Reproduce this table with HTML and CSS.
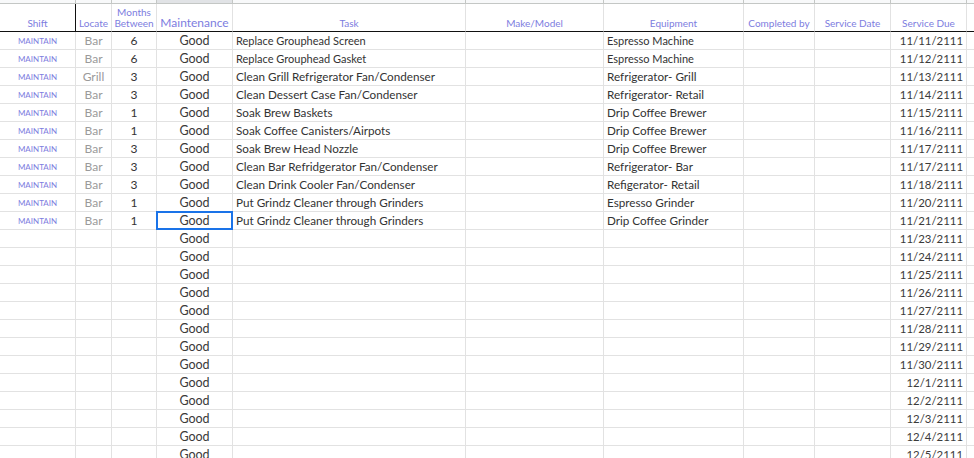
FILE: index.html
```html
<!DOCTYPE html>
<html>
<head>
<meta charset="utf-8">
<link rel="stylesheet" href="styles.css">
</head>
<body>
<div class="sheet">
  <div class="row strip">
    <div class="c"></div><div class="c"></div><div class="c"></div><div class="c sel"></div><div class="c"></div><div class="c"></div><div class="c"></div><div class="c"></div><div class="c"></div><div class="c"></div><div class="c"></div>
  </div>
  <div class="row head">
    <div class="c hs">Shift</div>
    <div class="c">Locate</div>
    <div class="c two">Months<br>Between</div>
    <div class="c big">Maintenance</div>
    <div class="c">Task</div>
    <div class="c">Make/Model</div>
    <div class="c">Equipment</div>
    <div class="c">Completed by</div>
    <div class="c">Service Date</div>
    <div class="c">Service Due</div>
    <div class="c"></div>
  </div>
  <div id="body"></div>
</div>
<script>
const data = [
 ["Bar","6","Replace Grouphead Screen","Espresso Machine","11/11/2111",1],
 ["Bar","6","Replace Grouphead Gasket","Espresso Machine","11/12/2111",1],
 ["Grill","3","Clean Grill Refrigerator Fan/Condenser","Refrigerator- Grill","11/13/2111"],
 ["Bar","3","Clean Dessert Case Fan/Condenser","Refrigerator- Retail","11/14/2111"],
 ["Bar","1","Soak Brew Baskets","Drip Coffee Brewer","11/15/2111"],
 ["Bar","1","Soak Coffee Canisters/Airpots","Drip Coffee Brewer","11/16/2111"],
 ["Bar","3","Soak Brew Head Nozzle","Drip Coffee Brewer","11/17/2111"],
 ["Bar","3","Clean Bar Refridgerator Fan/Condenser","Refrigerator- Bar","11/17/2111"],
 ["Bar","3","Clean Drink Cooler Fan/Condenser","Refigerator- Retail","11/18/2111"],
 ["Bar","1","Put Grindz Cleaner through Grinders","Espresso Grinder","11/20/2111"],
 ["Bar","1","Put Grindz Cleaner through Grinders","Drip Coffee Grinder","11/21/2111"]
];
const extra = ["11/23/2111","11/24/2111","11/25/2111","11/26/2111","11/27/2111","11/28/2111","11/29/2111","11/30/2111","12/1/2111","12/2/2111","12/3/2111","12/4/2111","12/5/2111"];
let html = "";
data.forEach((d,i)=>{
  const sm = d[5] ? " small" : "";
  html += `<div class="row">
  <div class="c shift">MAINTAIN</div>
  <div class="c loc">${d[0]}</div>
  <div class="c num">${d[1]}</div>
  <div class="c good${i===10?' active':''}">Good</div>
  <div class="c txt${sm}">${d[2]}</div>
  <div class="c"></div>
  <div class="c txt${sm}">${d[3]}</div>
  <div class="c"></div>
  <div class="c"></div>
  <div class="c date">${d[4]}</div>
  <div class="c"></div>
  </div>`;
});
extra.forEach(e=>{
  html += `<div class="row">
  <div class="c"></div><div class="c"></div><div class="c"></div>
  <div class="c good">Good</div>
  <div class="c"></div><div class="c"></div><div class="c"></div><div class="c"></div><div class="c"></div>
  <div class="c date">${e}</div>
  <div class="c"></div>
  </div>`;
});
document.getElementById("body").innerHTML = html;
</script>
</body>
</html>
```
FILE: styles.css
```css
html, body {
  margin: 0;
  padding: 0;
  background: #fff;
  overflow: hidden;
}
body {
  font-family: Lato, "Open Sans", sans-serif;
  color: #333;
  width: 974px;
  height: 458px;
}
.sheet {
  width: 974px;
}
.row {
  display: grid;
  grid-template-columns: 76px 36px 45px 76px 233px 138px 140px 71px 76px 76px 40px;
  height: 18px;
}
.c {
  box-sizing: border-box;
  border-right: 1px solid #e2e2e2;
  border-bottom: 1px solid #e2e2e2;
  height: 18px;
  line-height: 17px;
  white-space: nowrap;
  overflow: hidden;
  position: relative;
}
.strip {
  height: 4px;
}
.strip .c {
  height: 4px;
  background: #f8f9fa;
  border-right: 1px solid #c4c7c5;
  border-bottom: 1px solid #c4c7c5;
}
.strip .c.sel {
  background: #e1e3e6;
}
.head {
  height: 28px;
}
.head .c {
  height: 28px;
  border-bottom: 1px solid #111;
  color: #7d7de0;
  font-size: 10px;
  text-align: center;
  display: flex;
  align-items: flex-end;
  justify-content: center;
  line-height: 11px;
  padding-bottom: 2px;
}
.head .c.hs {
  border-right: 1px solid #111;
}
.head .c.big {
  font-size: 12px;
  line-height: 14px;
  padding-bottom: 1px;
}
.shift {
  font-size: 8px;
  text-align: center;
  color: #7d7de0;
  padding-top: 1px;
}
.loc {
  text-align: center;
  color: #9a9a9a;
  font-size: 12px;
}
.num {
  text-align: center;
  font-size: 12px;
  color: #333;
}
.good {
  text-align: center;
  font-size: 12.5px;
  color: #3a3a3a;
}
.good.active {
  overflow: visible;
}
.good.active::after {
  content: "";
  position: absolute;
  left: -1px;
  top: -1px;
  right: -1px;
  bottom: -1px;
  border: 2px solid #1a73e8;
}
.txt {
  font-size: 11.7px;
  padding-left: 3px;
  color: #333;
}
.txt.small {
  font-size: 11px;
}
.date {
  text-align: right;
  font-size: 11.4px;
  padding-right: 3px;
  color: #3a3a3a;
}
```
